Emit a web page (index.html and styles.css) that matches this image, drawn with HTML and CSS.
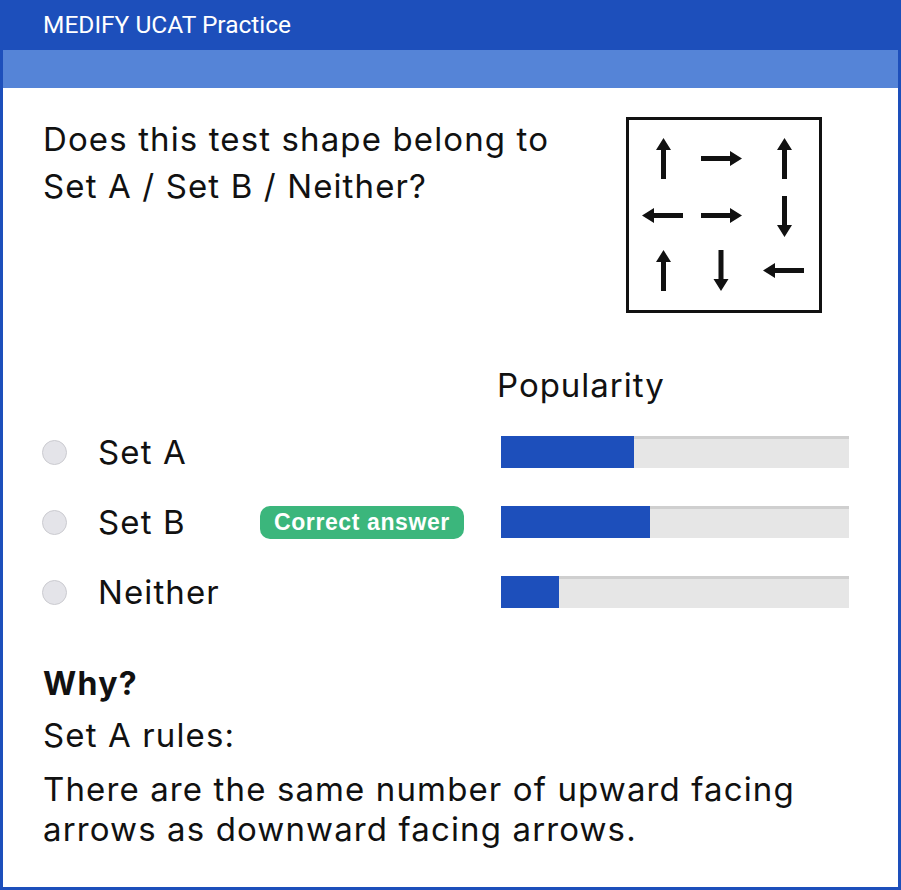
FILE: index.html
```html
<!DOCTYPE html>
<html>

<head lang="en">
    <meta charset="UTF-8">
    <title>MEDIFY UCAT Practice</title>
    <link rel="stylesheet" href="styles.css">
</head>

<body>
    <div class="app">
        <div class="top-bar">MEDIFY UCAT Practice</div>
        <div class="sub-bar"></div>

        <div class="content">
            <div class="question">
                <p class="q-text">Does this test shape belong to<br>Set A / Set B / Neither?</p>
                <!-- test shape -->
                <svg class="shape" width="196" height="196" viewBox="0 0 196 196">
                    <defs>
                        <path id="arr" d="M0 -2.5 H29 V-7.5 L41 0 L29 7.5 V2.5 H0 Z" fill="#111"/>
                    </defs>
                    <rect x="1.5" y="1.5" width="193" height="193" fill="#fff" stroke="#111" stroke-width="3"/>
                    <use href="#arr" transform="translate(37.5 62) rotate(-90)"/>
                    <use href="#arr" transform="translate(75 41.5)"/>
                    <use href="#arr" transform="translate(158.5 62) rotate(-90)"/>
                    <use href="#arr" transform="translate(57 98.5) rotate(180)"/>
                    <use href="#arr" transform="translate(75 98.5)"/>
                    <use href="#arr" transform="translate(158.5 79) rotate(90)"/>
                    <use href="#arr" transform="translate(37.5 174) rotate(-90)"/>
                    <use href="#arr" transform="translate(95 133) rotate(90)"/>
                    <use href="#arr" transform="translate(178 153.5) rotate(180)"/>
                </svg>
            </div>

            <div class="pop-title">Popularity</div>

            <ul class="options">
                <li>
                    <span class="radio"></span>
                    <span class="label">Set A</span>
                    <span class="badge-slot"></span>
                    <span class="bar"><span class="fill" style="width: 38.2%"></span></span>
                </li>
                <li>
                    <span class="radio"></span>
                    <span class="label">Set B</span>
                    <span class="badge-slot"><span class="badge">Correct answer</span></span>
                    <span class="bar"><span class="fill" style="width: 42.8%"></span></span>
                </li>
                <li>
                    <span class="radio"></span>
                    <span class="label">Neither</span>
                    <span class="badge-slot"></span>
                    <span class="bar"><span class="fill" style="width: 16.7%"></span></span>
                </li>
            </ul>

            <div class="why">
                <h3>Why?</h3>
                <p class="rules">Set A rules:</p>
                <p class="explain">There are the same number of upward facing<br>arrows as downward facing arrows.</p>
            </div>
        </div>
    </div>
</body>

</html>
```

FILE: styles.css
```css
* {
    margin: 0;
    padding: 0;
    box-sizing: border-box;
}

ul {
    list-style: none;
}

body {
    background-color: #fff;
    font-family: Inter, "Noto Sans", sans-serif;
    color: #111;
    letter-spacing: 0.07em;
}

.app {
    width: 901px;
    height: 890px;
    border: 3px solid #1d4fbb;
    border-top: 0;
}

.top-bar {
    height: 50px;
    background: #1d4fbb;
    color: #fff;
    font-family: Roboto, "Liberation Sans", sans-serif;
    font-size: 24.5px;
    letter-spacing: 0;
    line-height: 50px;
    margin: 0 -3px;
    padding-left: 43px;
}

.sub-bar {
    height: 38px;
    background: #5584d7;
}

.content {
    padding: 0 49px 0 40px;
}

.question {
    display: flex;
    justify-content: space-between;
    padding-top: 29px;
    padding-right: 27px;
}

.q-text {
    font-size: 33px;
    line-height: 47px;
    margin-top: -1px;
}

.shape {
    display: block;
}

.pop-title {
    font-size: 33px;
    line-height: 40px;
    padding-left: 454px;
    margin-top: 52px;
    letter-spacing: 0.03em;
}

.options {
    margin-top: 12px;
}

.options li {
    display: flex;
    align-items: center;
    height: 70px;
}

.radio {
    width: 25px;
    height: 25px;
    border-radius: 50%;
    background: #e4e4e9;
    border: 1.5px solid #cbcbd0;
    margin-left: -1px;
    margin-right: 31px;
}

.label {
    width: 162px;
    font-size: 33px;
}

.badge-slot {
    width: 241px;
}

.badge {
    display: inline-block;
    background: #3bb67c;
    color: #fff;
    font-family: "Liberation Sans", Arial, sans-serif;
    font-weight: bold;
    font-size: 23px;
    letter-spacing: 0.6px;
    line-height: 33px;
    padding: 0 14px;
    border-radius: 10px;
}

.bar {
    display: block;
    width: 348px;
    height: 32px;
    background: #e6e6e6;
    border-top: 3px solid #cfcfcf;
    position: relative;
}

.fill {
    position: absolute;
    left: 0;
    top: -3px;
    bottom: 0;
    background: #1d4fbb;
}

.why {
    margin-top: 37px;
}

.why h3 {
    font-size: 32px;
    font-weight: bold;
    line-height: 40px;
    letter-spacing: 0.04em;
}

.rules {
    font-size: 33px;
    line-height: 40px;
    margin-top: 11px;
}

.explain {
    font-size: 33px;
    line-height: 40px;
    margin-top: 14px;
}
```
